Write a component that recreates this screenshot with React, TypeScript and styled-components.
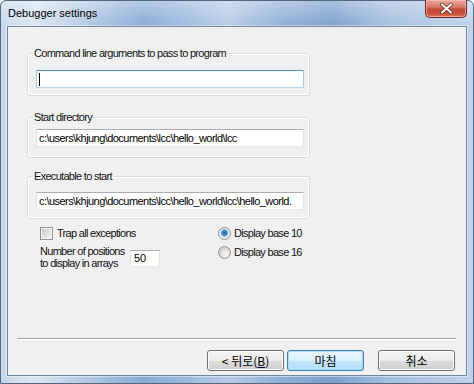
import React from "react";
import styled, { createGlobalStyle, css } from "styled-components";

const GlobalStyle = createGlobalStyle`
  html, body { margin: 0; padding: 0; background: #ffffff; }
  body {
    width: 474px; height: 384px; overflow: hidden;
    font-family: "Liberation Sans", Arial, sans-serif;
  }
  * { box-sizing: border-box; }
`;

const uiText = css`
  font-family: "Liberation Sans", Arial, sans-serif;
  font-size: 11px;
  letter-spacing: -0.7px;
  color: #111;
`;

const Window = styled.div`
  width: 474px;
  height: 384px;
  display: flex;
  flex-direction: column;
  border: 1px solid #56687e;
  border-radius: 6px 6px 0 0;
  background:
    linear-gradient(180deg, rgba(255,255,255,0.35) 0px, rgba(255,255,255,0) 26px),
    linear-gradient(90deg, #c6d7ea 0%, #d9e5f2 7%, #b3cae4 18%, #88abd5 30%, #9fbce0 40%, #b6cce6 48%, #8eaed6 60%, #7c9fcc 70%, #a4bfdf 82%, #bfd3ea 100%);
`;

const TitleBar = styled.div`
  height: 25px;
  display: flex;
  justify-content: space-between;
  align-items: flex-start;
  padding-left: 7px;
`;

const Title = styled.div`
  margin-top: 5px;
  font-family: "Liberation Sans", Arial, sans-serif;
  font-size: 11px;
  line-height: 14px;
  color: #000;
`;

const CloseButton = styled.div`
  width: 42px;
  height: 18px;
  margin-right: 6px;
  margin-top: -1px;
  border: 1px solid #6a2a22;
  border-top: none;
  border-radius: 0 0 5px 5px;
  background: linear-gradient(180deg, #e9a99c 0%, #d9796a 40%, #c44a36 55%, #c9503a 80%, #dc7a5c 100%);
  box-shadow: inset 0 0 0 1px rgba(255, 200, 190, 0.55);
  display: flex;
  align-items: center;
  justify-content: center;
`;

const Client = styled.div`
  flex: 1;
  margin: 0 6px 7px 6px;
  border: 1px solid #72869f;
  box-shadow: 0 0 0 1px rgba(255, 255, 255, 0.45);
  background: #f0f0f0;
  display: flex;
  flex-direction: column;
`;

const Content = styled.div`
  padding-left: 19px;
  display: flex;
  flex-direction: column;
`;

const Group = styled.fieldset<{ $mt: number; $pt: number; $pb: number }>`
  width: 283px;
  margin: ${(p) => p.$mt}px 0 0 0;
  padding: ${(p) => p.$pt}px 5px ${(p) => p.$pb}px 8px;
  border: 1px solid #d5dfe5;
  border-radius: 3px;
  box-shadow: inset 0 0 0 1px #ffffff;
  min-inline-size: auto;
`;

const Legend = styled.legend`
  ${uiText};
  line-height: 14px;
  padding: 0 1px;
  margin-left: -3px;
`;

const TextBox = styled.div<{ $focused?: boolean }>`
  width: 268px;
  height: 18px;
  background: #ffffff;
  border: 1px solid;
  border-color: ${(p) =>
    p.$focused ? "#5a8fbf #a9c9e2 #b9d6ea #a9c9e2" : "#abadb3 #e2e3ea #e3e9ef #e2e3ea"};
  padding-left: 2px;
  font-family: "Liberation Sans", Arial, sans-serif;
  font-size: 11px;
  letter-spacing: -0.55px;
  line-height: 16px;
  color: #000;
  white-space: nowrap;
  overflow: hidden;
  display: flex;
  align-items: center;
`;

const Caret = styled.span`
  display: inline-block;
  width: 1px;
  height: 13px;
  background: #000;
`;

const Options = styled.div`
  margin-top: 7px;
  padding-left: 32px;
  display: grid;
  grid-template-columns: 178px 1fr;
`;

const Column = styled.div<{ $gap: number }>`
  display: flex;
  flex-direction: column;
  gap: ${(p) => p.$gap}px;
`;

const OptionRow = styled.div`
  ${uiText};
  display: flex;
  align-items: center;
  height: 14px;
  gap: 2px;
  white-space: nowrap;
`;

const CheckBox = styled.span`
  width: 13px;
  height: 13px;
  border: 1px solid #8e8f8f;
  background: linear-gradient(135deg, #c4c7cc 0%, #dfe0e2 55%, #f6f6f6 100%);
  box-shadow: inset 0 0 0 1px #f4f4f4;
  flex: none;
  margin-right: 2px;
`;

const Radio = styled.span<{ $checked?: boolean }>`
  width: 13px;
  height: 13px;
  border-radius: 50%;
  border: 1px solid #8e8f8f;
  background: ${(p) =>
    p.$checked
      ? "radial-gradient(circle at 50% 45%, #1f5f93 0px, #3b82bf 2px, #7eb9e6 3.5px, #f4f4f4 4.2px, #e6e6e6 6px)"
      : "radial-gradient(circle at 60% 65%, #f9f9f9 0px, #e2e2e2 4px, #cfd1d4 6px)"};
  flex: none;
  margin-right: 1px;
`;

const NumberRow = styled.div`
  display: flex;
  align-items: flex-start;
`;

const NumberLabel = styled.div`
  ${uiText};
  width: 90px;
  line-height: 12px;
  white-space: nowrap;
`;

const SmallBox = styled.div`
  ${uiText};
  letter-spacing: 0;
  color: #000;
  width: 30px;
  height: 17px;
  margin-top: 5px;
  background: #fff;
  border: 1px solid;
  border-color: #abadb3 #e2e3ea #e3e9ef #e2e3ea;
  padding-left: 3px;
  line-height: 15px;
`;

const Spacer = styled.div`
  flex: 1;
`;

const Separator = styled.div`
  height: 2px;
  margin: 0 10px 0 9px;
  border-top: 1px solid #a0a0a0;
  border-bottom: 1px solid #ffffff;
`;

const ButtonRow = styled.div`
  display: flex;
  justify-content: flex-end;
  padding: 10px 11px 4px 0;
`;

const Button = styled.div<{ $primary?: boolean; $gap?: number }>`
  width: 77px;
  height: 21px;
  margin-left: ${(p) => p.$gap ?? 0}px;
  border: 1px solid ${(p) => (p.$primary ? "#3c7fb1" : "#707070")};
  border-radius: 3px;
  background: ${(p) =>
    p.$primary
      ? "linear-gradient(180deg, #eaf6fd 0%, #d9f0fc 50%, #c4e7fb 51%, #b3dcf4 100%)"
      : "linear-gradient(180deg, #f2f2f2 0%, #ebebeb 50%, #dddddd 51%, #cfcfcf 100%)"};
  box-shadow: inset 0 0 0 1px ${(p) => (p.$primary ? "#a9dcf6" : "#fcfcfc")};
  display: flex;
  align-items: center;
  justify-content: center;
  font-family: "Noto Sans CJK KR", "Liberation Sans", sans-serif;
  font-size: 12px;
  line-height: 14px;
  color: #000;
`;

const Mnemonic = styled.span`
  text-decoration: underline;
`;

export default function App() {
  const dir = "c:\\users\\khjung\\documents\\lcc\\hello_world\\lcc";
  const exe = "c:\\users\\khjung\\documents\\lcc\\hello_world\\lcc\\hello_world.";
  return (
    <>
      <GlobalStyle />
      <Window>
        <TitleBar>
          <Title>Debugger settings</Title>
          <CloseButton>
            <svg width="13" height="11" viewBox="0 0 13 11">
              <path d="M2 1.5 L11 9.5 M11 1.5 L2 9.5" stroke="#5a2a24" strokeWidth="3.6" strokeLinecap="round" />
              <path d="M2 1.5 L11 9.5 M11 1.5 L2 9.5" stroke="#ffffff" strokeWidth="2" strokeLinecap="round" />
            </svg>
          </CloseButton>
        </TitleBar>
        <Client>
          <Content>
            <Group $mt={19} $pt={10} $pb={7}>
              <Legend>Command line arguments to pass to program</Legend>
              <TextBox $focused>
                <Caret />
              </TextBox>
            </Group>
            <Group $mt={14} $pt={5} $pb={10}>
              <Legend>Start directory</Legend>
              <TextBox>{dir}</TextBox>
            </Group>
            <Group $mt={11} $pt={9} $pb={8}>
              <Legend>Executable to start</Legend>
              <TextBox>{exe}</TextBox>
            </Group>
          </Content>
          <Options>
            <Column $gap={5}>
              <OptionRow>
                <CheckBox />
                Trap all exceptions
              </OptionRow>
              <NumberRow>
                <NumberLabel>
                  Number of positions
                  <br />
                  to display in arrays
                </NumberLabel>
                <SmallBox>50</SmallBox>
              </NumberRow>
            </Column>
            <Column $gap={5}>
              <OptionRow>
                <Radio $checked />
                Display base 10
              </OptionRow>
              <OptionRow>
                <Radio />
                Display base 16
              </OptionRow>
            </Column>
          </Options>
          <Spacer />
          <Separator />
          <ButtonRow>
            <Button>
              &lt; 뒤로(<Mnemonic>B</Mnemonic>)
            </Button>
            <Button $primary $gap={3}>
              마침
            </Button>
            <Button $gap={14}>취소</Button>
          </ButtonRow>
        </Client>
      </Window>
    </>
  );
}
